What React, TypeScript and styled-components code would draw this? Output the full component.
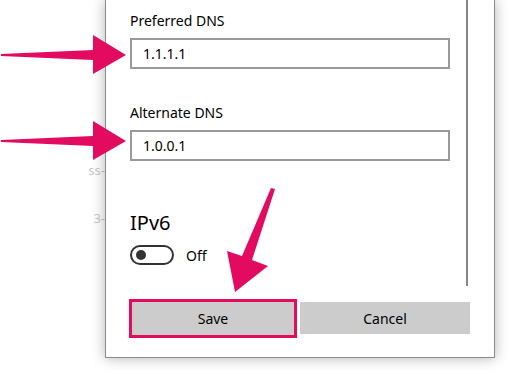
import React from 'react'
import styled, { createGlobalStyle } from 'styled-components'

const GlobalStyle = createGlobalStyle`
  html, body {
    margin: 0;
    padding: 0;
    background: #ffffff;
  }
  body {
    font-family: 'Noto Sans', 'Open Sans', Arial, sans-serif;
    color: #000;
  }
`

const PINK = '#e20b5f'

const Page = styled.div`
  position: relative;
  display: flex;
  width: 508px;
  height: 373px;
  overflow: hidden;
  background: #fff;
`

const Backdrop = styled.div`
  width: 105px;
  flex-shrink: 0;
  padding-top: 161px;
  display: flex;
  flex-direction: column;
  align-items: flex-end;
  gap: 30px;
  color: #c8c8c8;
  font-size: 13px;
  line-height: 18px;
`

const Dialog = styled.div`
  width: 388px;
  height: 357px;
  flex-shrink: 0;
  display: flex;
  flex-direction: column;
  background: #fff;
  border: 1px solid #8a8a8a;
  border-top: none;
  box-shadow: 0 0 13px rgba(0, 0, 0, 0.3);
`

const ScrollArea = styled.div`
  display: flex;
  height: 286px;
`

const Content = styled.div`
  flex: 1;
  padding-left: 24px;
  padding-top: 11px;
`

const Scrollbar = styled.div`
  width: 2px;
  height: 286px;
  margin-right: 26px;
  background: #858585;
`

const Label = styled.div`
  font-size: 14px;
  line-height: 20px;
  margin-bottom: 7px;
`

const Field = styled.input<{ $gap?: number }>`
  box-sizing: border-box;
  display: block;
  width: 320px;
  height: 31px;
  border: 2px solid #999999;
  padding: 0 11px;
  font: inherit;
  font-size: 14px;
  color: #000;
  outline: none;
  margin-bottom: ${(p) => p.$gap ?? 0}px;
`

const SectionTitle = styled.div`
  font-size: 20px;
  line-height: 28px;
  margin-top: 48px;
`

const ToggleRow = styled.div`
  display: flex;
  align-items: center;
  gap: 12px;
  margin-top: 8px;
  font-size: 14px;
`

const Toggle = styled.div`
  box-sizing: border-box;
  width: 44px;
  height: 20px;
  border: 2px solid #333;
  border-radius: 10px;
  display: flex;
  align-items: center;
  padding-left: 4px;
`

const Knob = styled.div`
  width: 10px;
  height: 10px;
  border-radius: 50%;
  background: #333;
`

const Footer = styled.div`
  display: grid;
  grid-template-columns: 162px 170px;
  gap: 6px;
  padding: 16px 0 0 26px;
  align-items: start;
`

const Button = styled.button<{ $marked?: boolean }>`
  height: ${(p) => (p.$marked ? 33 : 32)}px;
  border: none;
  background: #cccccc;
  font: inherit;
  font-size: 14px;
  color: #000;
  outline: ${(p) => (p.$marked ? `3px solid ${PINK}` : 'none')};
`

const Overlay = styled.svg`
  position: absolute;
  left: 0;
  top: 0;
  pointer-events: none;
`

const App: React.FC = () => {
  return (
    <>
      <GlobalStyle />
      <Page>
        <Backdrop>
          <span>ss-</span>
          <span>3-</span>
        </Backdrop>
        <Dialog>
          <ScrollArea>
            <Content>
              <Label>Preferred DNS</Label>
              <Field defaultValue="1.1.1.1" $gap={34} />
              <Label>Alternate DNS</Label>
              <Field defaultValue="1.0.0.1" />
              <SectionTitle>IPv6</SectionTitle>
              <ToggleRow>
                <Toggle>
                  <Knob />
                </Toggle>
                <span>Off</span>
              </ToggleRow>
            </Content>
            <Scrollbar />
          </ScrollArea>
          <Footer>
            <Button $marked>Save</Button>
            <Button>Cancel</Button>
          </Footer>
        </Dialog>
        <Overlay width="508" height="373" viewBox="0 0 508 373">
          <polygon
            fill={PINK}
            points="1,54 93,50 93,35 126,55 93,74 93,60 1,56"
          />
          <polygon
            fill={PINK}
            points="1,140 93,136 93,121 126,141 93,160 93,146 1,142"
          />
          <polygon
            fill={PINK}
            points="271,188 275,189 252,260 268,266 235,292 227,251 242,256"
          />
        </Overlay>
      </Page>
    </>
  )
}

export default App
